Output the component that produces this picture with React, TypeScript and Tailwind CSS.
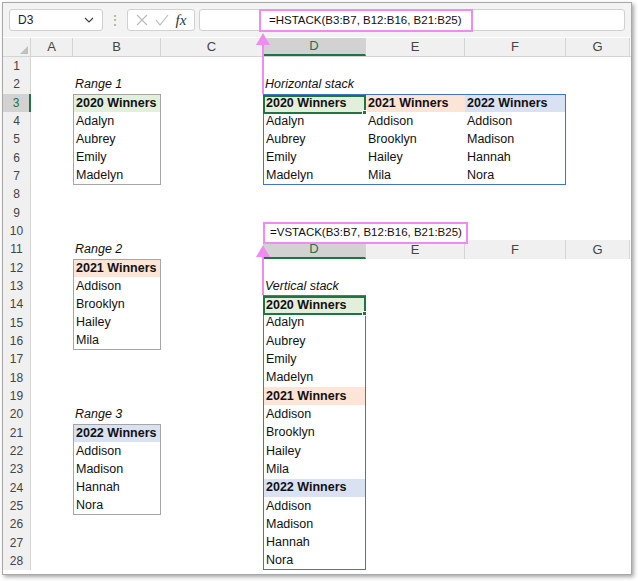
const cols = [
  { k: 'A', w: 42 },
  { k: 'B', w: 88 },
  { k: 'C', w: 102 },
  { k: 'D', w: 103 },
  { k: 'E', w: 99 },
  { k: 'F', w: 101 },
  { k: 'G', w: 64 },
];

type Cell = { t?: string; cls?: string };
const grid: Record<number, Record<string, Cell>> = {};
const put = (r: number, c: string, t: string, cls = '') => {
  grid[r] = grid[r] || {};
  grid[r][c] = { t, cls };
};

const green = 'bg-[#e2efda] font-bold';
const orange = 'bg-[#fce4d6] font-bold';
const blue = 'bg-[#d9e1f2] font-bold';
const gb = 'border-x border-[#a6a6a6]';

put(2, 'B', 'Range 1', 'italic');
put(3, 'B', '2020 Winners', `${green} ${gb} border-t`);
['Adalyn', 'Aubrey', 'Emily', 'Madelyn'].forEach((n, i) => put(4 + i, 'B', n, `${gb} ${i === 3 ? 'border-b' : ''}`));
put(11, 'B', 'Range 2', 'italic');
put(12, 'B', '2021 Winners', `${orange} ${gb} border-t`);
['Addison', 'Brooklyn', 'Hailey', 'Mila'].forEach((n, i) => put(13 + i, 'B', n, `${gb} ${i === 3 ? 'border-b' : ''}`));
put(20, 'B', 'Range 3', 'italic');
put(21, 'B', '2022 Winners', `${blue} ${gb} border-t`);
['Addison', 'Madison', 'Hannah', 'Nora'].forEach((n, i) => put(22 + i, 'B', n, `${gb} ${i === 3 ? 'border-b' : ''}`));

put(2, 'D', 'Horizontal stack', 'italic');
const h = [
  ['2020 Winners', 'Adalyn', 'Aubrey', 'Emily', 'Madelyn'],
  ['2021 Winners', 'Addison', 'Brooklyn', 'Hailey', 'Mila'],
  ['2022 Winners', 'Addison', 'Madison', 'Hannah', 'Nora'],
];
const hb = 'border-[#4472c4]';
h.forEach((col, ci) => {
  const c = ['D', 'E', 'F'][ci];
  col.forEach((n, ri) => {
    let cls = hb;
    if (ri === 0) cls += ` border-t ${[green, orange, blue][ci]}`;
    if (ri === 4) cls += ' border-b';
    if (ci === 0) cls += ' border-l';
    if (ci === 2) cls += ' border-r';
    put(3 + ri, c, n, cls);
  });
});

put(13, 'D', 'Vertical stack', 'italic');
const v = [...h[0], ...h[1], ...h[2]];
v.forEach((n, i) => {
  let cls = `border-x ${hb}`;
  if (i === 0) cls += ` border-t ${green}`;
  if (i === 5) cls += ` ${orange}`;
  if (i === 10) cls += ` ${blue}`;
  if (i === 14) cls += ' border-b';
  put(14 + i, 'D', n, cls);
});

const RH = 18.33;

function HeadCell({ k, w }: { k: string; w: number }) {
  return (
    <div
      style={{ width: w }}
      className={`h-full flex items-center justify-center text-[13px] border-r border-[#d4d4d4] ${
        k === 'D' ? 'bg-[#d2d2d2] border-b-2 border-b-[#217346] text-[#217346]' : 'bg-[#f0f0f0] text-[#444]'
      }`}
    >
      {k}
    </div>
  );
}

function DataCell({ r, k, w }: { r: number; k: string; w: number }) {
  const cell = grid[r]?.[k];
  return (
    <div
      style={{ width: w }}
      className={`h-full flex items-center px-[2px] text-[12.5px] text-[#111] whitespace-nowrap ${cell?.cls ?? ''}`}
    >
      {cell?.t}
    </div>
  );
}

export default function App() {
  return (
    <div className="w-[638px] h-[581px] bg-white p-[2px]" style={{ fontFamily: '"Liberation Sans", Arial, sans-serif' }}>
      <div className="relative w-[630px] h-[573px] border border-[#a8a8a8] shadow-[2px_2px_4px_rgba(0,0,0,0.35)] bg-white overflow-hidden">
        {/* formula bar */}
        <div className="h-[34px] bg-[#f3f3f3] flex items-center gap-[4px] px-[6px]">
          <div className="w-[94px] h-[22px] bg-white border border-[#d0d0d0] rounded-[3px] flex items-center justify-between px-[8px] text-[12px] text-[#222]">
            D3
            <svg width="10" height="6" viewBox="0 0 10 6"><path d="M1 1l4 4 4-4" fill="none" stroke="#444" strokeWidth="1.2" /></svg>
          </div>
          <div className="text-[#999] text-[12px] px-[2px]">⋮</div>
          <div className="w-[68px] h-[22px] bg-white border border-[#d0d0d0] rounded-[3px] flex items-center justify-around px-[4px]">
            <svg width="12" height="12" viewBox="0 0 12 12"><path d="M1 1l10 10M11 1L1 11" stroke="#bbb" strokeWidth="1.2" /></svg>
            <svg width="14" height="12" viewBox="0 0 14 12"><path d="M1 6l4 5 8-10" fill="none" stroke="#bbb" strokeWidth="1.2" /></svg>
            <span className="italic text-[#333] text-[15px]" style={{ fontFamily: '"Liberation Serif", serif' }}>fx</span>
          </div>
          <div className="flex-1 h-[22px] bg-white border border-[#d0d0d0] rounded-[3px]" />
        </div>
        <div className="absolute left-[256px] top-[6px] w-[214px] h-[23px] border-2 border-[#f08cf0] bg-white flex items-center px-[8px] text-[11.5px] text-[#111] whitespace-nowrap">
          =HSTACK(B3:B7, B12:B16, B21:B25)
        </div>

        {/* column header */}
        <div className="flex h-[19px] mt-[1px] border-b border-[#d4d4d4]">
          <div className="w-[28px] h-full bg-[#f0f0f0] border-r border-[#d4d4d4] relative">
            <div className="absolute right-[2px] bottom-[2px] w-0 h-0 border-l-[8px] border-l-transparent border-b-[8px] border-b-[#c0c0c0]" />
          </div>
          {cols.map((c) => (
            <HeadCell key={c.k} k={c.k} w={c.w} />
          ))}
        </div>

        {Array.from({ length: 28 }, (_, i) => i + 1).map((r) => (
          <div key={r} className="flex" style={{ height: RH }}>
            <div
              className={`w-[28px] h-full flex items-center justify-center text-[12px] border-r ${
                r === 3 ? 'bg-[#d2d2d2] text-[#217346] border-r-2 border-r-[#217346]' : 'bg-[#f0f0f0] border-[#d4d4d4] text-[#444]'
              }`}
            >
              {r}
            </div>
            {cols.map((c) =>
              r === 11 && !['A', 'B', 'C'].includes(c.k) ? (
                <HeadCell key={c.k} k={c.k} w={c.w} />
              ) : (
                <DataCell key={c.k} r={r} k={c.k} w={c.w} />
              )
            )}
          </div>
        ))}

        {/* selections */}
        <div className="absolute left-[260px] top-[92px] w-[103px] h-[19px] border-2 border-[#217346] pointer-events-none">
          <div className="absolute -right-[3px] -bottom-[3px] w-[5px] h-[5px] bg-[#217346] border border-white" />
        </div>
        <div className="absolute left-[260px] top-[293px] w-[103px] h-[19px] border-2 border-[#217346] pointer-events-none">
          <div className="absolute -right-[3px] -bottom-[3px] w-[5px] h-[5px] bg-[#217346] border border-white" />
        </div>

        {/* VSTACK box */}
        <div className="absolute left-[260px] top-[219px] w-[205px] h-[22px] border-2 border-[#f08cf0] bg-white flex items-center px-[5px] text-[11.5px] text-[#111] whitespace-nowrap">
          =VSTACK(B3:B7, B12:B16, B21:B25)
        </div>

        {/* arrows */}
        <svg className="absolute left-0 top-0 pointer-events-none" width="630" height="573">
          <path d="M260 91V36" stroke="#f08cf0" strokeWidth="2" />
          <path d="M253 42l7-12 7 12z" fill="#f08cf0" />
          <path d="M260 292V252" stroke="#f08cf0" strokeWidth="2" />
          <path d="M253 254l7-12 7 12z" fill="#f08cf0" />
        </svg>
      </div>
    </div>
  );
}
